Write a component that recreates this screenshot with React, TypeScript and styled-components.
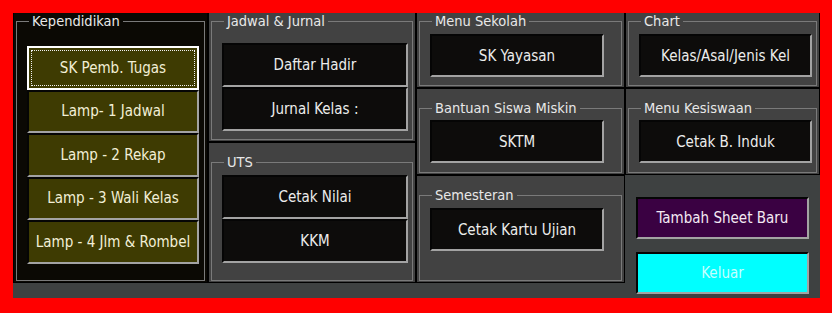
import styled, { createGlobalStyle, css } from "styled-components";

const GlobalStyle = createGlobalStyle`
    html, body {
        margin: 0;
        padding: 0;
        background: #ff0000;
    }
`;

const font = `"DejaVu Sans Condensed", "DejaVu Sans", sans-serif`;

const Frame = styled.div`
    width: 832px;
    height: 313px;
    box-sizing: border-box;
    padding: 13px 12px 15px 13px;
    background: #ff0000;
`;

const Viewport = styled.div`
    height: 285px;
    overflow: hidden;
    background: #3e4141;
`;

const Form = styled.div`
    display: flex;
    height: 282px;
    margin-top: -12px;
`;

const Column = styled.div<{ $w: number }>`
    display: flex;
    flex-direction: column;
    width: ${({ $w }) => $w}px;
    flex-shrink: 0;
`;

const Panel = styled.section<{ $h?: number; $dark?: boolean }>`
    box-sizing: border-box;
    display: flex;
    height: ${({ $h }) => ($h ? `${$h}px` : "auto")};
    flex: ${({ $h }) => ($h ? "none" : "1")};
    border: 1px solid #000;
    background: ${({ $dark }) => ($dark ? "#0b0904" : "#424242")};
`;

const Group = styled.fieldset`
    flex: 1;
    min-width: 0;
    margin: 11px 2px 1px 2px;
    padding: 0;
    border: 1px solid #7a7a7a;
`;

const Title = styled.legend`
    margin-left: 12px;
    padding: 0 3px;
    font-family: ${font};
    font-size: 14.5px;
    line-height: 16px;
    color: #e8e8e8;
`;

const Stack = styled.div<{ $w: number; $top: number }>`
    display: flex;
    flex-direction: column;
    width: ${({ $w }) => $w}px;
    margin: ${({ $top }) => $top}px 0 0 10px;
`;

type Variant = "olive" | "black" | "purple" | "cyan";

const fills: Record<Variant, { bg: string; fg: string }> = {
    olive: { bg: "#3e3b02", fg: "#f2efd6" },
    black: { bg: "#0d0c0b", fg: "#ececec" },
    purple: { bg: "#3a0142", fg: "#f3e9f3" },
    cyan: { bg: "#00ffff", fg: "#c4ffff" },
};

const Btn = styled.button<{ $v: Variant; $focus?: boolean; $h?: number }>`
    display: block;
    box-sizing: border-box;
    width: 100%;
    height: ${({ $h }) => $h ?? 44}px;
    margin: 0;
    padding: 0;
    border-style: solid;
    border-width: 2px;
    border-color: #050505 #a3a3a3 #a3a3a3 #050505;
    background: ${({ $v }) => fills[$v].bg};
    color: ${({ $v }) => fills[$v].fg};
    font-family: ${font};
    font-size: 15px;
    text-align: center;
    white-space: nowrap;
    cursor: pointer;

    ${({ $focus }) =>
        $focus &&
        css`
            border-color: #ffffff;
            outline: 1px dotted #f0f0f0;
            outline-offset: -5px;
        `}
`;

const SideArea = styled.div`
    display: flex;
    flex-direction: column;
    gap: 13px;
    width: 173px;
    padding: 22px 0 0 11px;
`;

export default function App() {
    return (
        <>
            <GlobalStyle />
            <Frame>
                <Viewport>
                    <Form>
                        <Column $w={195}>
                            <Panel $dark $h={282}>
                                <Group>
                                    <Title>Kependidikan</Title>
                                    <Stack $w={172} $top={17}>
                                        <Btn $v="olive" $focus $h={43.5}>
                                            SK Pemb. Tugas
                                        </Btn>
                                        <Btn $v="olive" $h={43.5}>Lamp- 1 Jadwal</Btn>
                                        <Btn $v="olive" $h={43.5}>Lamp - 2 Rekap</Btn>
                                        <Btn $v="olive" $h={43.5}>Lamp - 3 Wali Kelas</Btn>
                                        <Btn $v="olive" $h={43.5}>Lamp - 4 Jlm &amp; Rombel</Btn>
                                    </Stack>
                                </Group>
                            </Panel>
                        </Column>

                        <Column $w={208}>
                            <Panel $h={141}>
                                <Group>
                                    <Title>Jadwal &amp; Jurnal</Title>
                                    <Stack $w={186} $top={14}>
                                        <Btn $v="black">Daftar Hadir</Btn>
                                        <Btn $v="black">Jurnal Kelas :</Btn>
                                    </Stack>
                                </Group>
                            </Panel>
                            <Panel $h={141}>
                                <Group>
                                    <Title>UTS</Title>
                                    <Stack $w={186} $top={5}>
                                        <Btn $v="black">Cetak Nilai</Btn>
                                        <Btn $v="black">KKM</Btn>
                                    </Stack>
                                </Group>
                            </Panel>
                        </Column>

                        <Column $w={209}>
                            <Panel $h={87}>
                                <Group>
                                    <Title>Menu Sekolah</Title>
                                    <Stack $w={174} $top={5}>
                                        <Btn $v="black" $h={43}>SK Yayasan</Btn>
                                    </Stack>
                                </Group>
                            </Panel>
                            <Panel $h={87}>
                                <Group>
                                    <Title>Bantuan Siswa Miskin</Title>
                                    <Stack $w={174} $top={4}>
                                        <Btn $v="black" $h={43}>SKTM</Btn>
                                    </Stack>
                                </Group>
                            </Panel>
                            <Panel $h={108}>
                                <Group>
                                    <Title>Semesteran</Title>
                                    <Stack $w={174} $top={5}>
                                        <Btn $v="black" $h={43}>Cetak Kartu Ujian</Btn>
                                    </Stack>
                                </Group>
                            </Panel>
                        </Column>

                        <Column $w={195}>
                            <Panel $h={87}>
                                <Group>
                                    <Title>Chart</Title>
                                    <Stack $w={173} $top={5}>
                                        <Btn $v="black" $h={43}>Kelas/Asal/Jenis Kel</Btn>
                                    </Stack>
                                </Group>
                            </Panel>
                            <Panel $h={87}>
                                <Group>
                                    <Title>Menu Kesiswaan</Title>
                                    <Stack $w={173} $top={4}>
                                        <Btn $v="black" $h={43}>Cetak B. Induk</Btn>
                                    </Stack>
                                </Group>
                            </Panel>
                            <SideArea>
                                <Btn $v="purple" $h={42}>Tambah Sheet Baru</Btn>
                                <Btn $v="cyan" $h={42}>Keluar</Btn>
                            </SideArea>
                        </Column>
                    </Form>
                </Viewport>
            </Frame>
        </>
    );
}
